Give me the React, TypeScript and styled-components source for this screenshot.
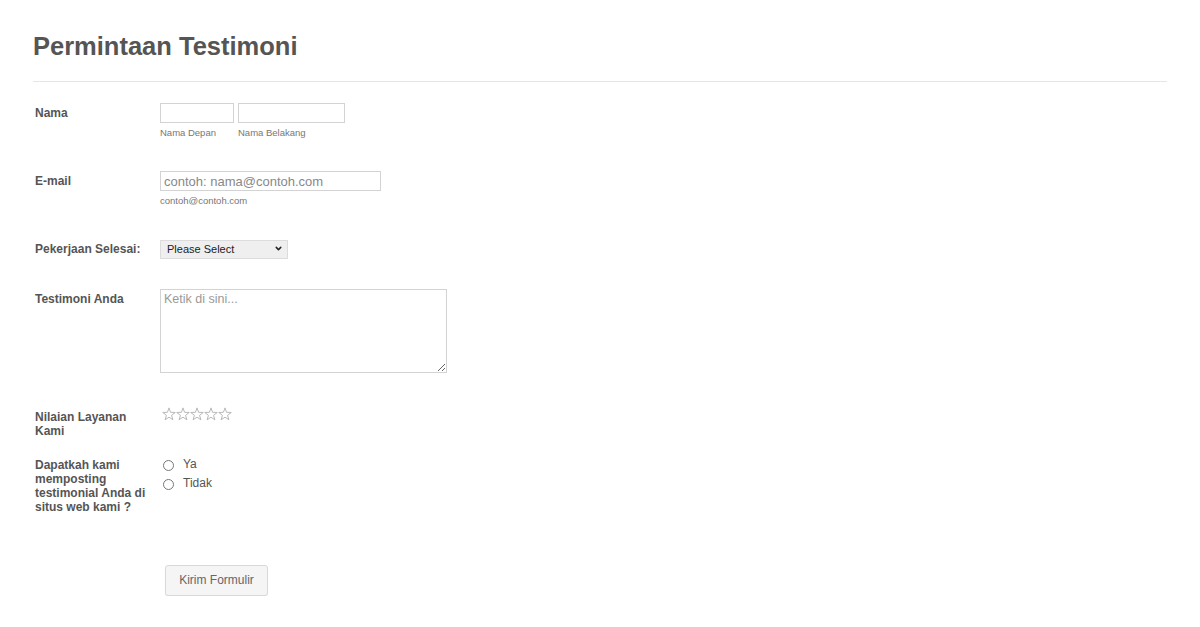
import React from "react";
import styled, { createGlobalStyle } from "styled-components";
import { ChevronDown } from "lucide-react";

const GlobalStyle = createGlobalStyle`
  body {
    margin: 0;
    background: #fff;
    font-family: "Liberation Sans", Arial, sans-serif;
  }
`;

const Page = styled.div`
  padding: 31px 33px 0 33px;
`;

const Title = styled.h1`
  margin: 0;
  font-size: 25.5px;
  line-height: 30px;
  font-weight: 700;
  color: #555;
`;

const Divider = styled.hr`
  margin: 20px 0 0 0;
  border: none;
  border-top: 1px solid #e6e6e6;
`;

const Form = styled.form`
  display: flex;
  flex-direction: column;
  padding: 21px 0 0 2px;
`;

const Row = styled.div<{ $gap: number }>`
  display: flex;
  align-items: flex-start;
  gap: 10px;
  padding-bottom: ${(p) => p.$gap}px;
`;

const Label = styled.label`
  width: 115px;
  flex-shrink: 0;
  padding-top: 3px;
  font-size: 12px;
  line-height: 14px;
  font-weight: 700;
  color: #555;
`;

const Field = styled.div`
  display: flex;
  gap: 4px;
`;

const FieldPart = styled.div`
  display: flex;
  flex-direction: column;
`;

const TextInput = styled.input<{ $width: number }>`
  box-sizing: border-box;
  width: ${(p) => p.$width}px;
  height: 20px;
  margin: 0;
  padding: 0 3px;
  border: 1px solid #d3d3d3;
  font-family: inherit;
  font-size: 13px;
  color: #333;
  outline: none;

  &::placeholder {
    color: #888;
  }
`;

const SubLabel = styled.span`
  margin-top: 4px;
  font-size: 9.5px;
  line-height: 12px;
  color: #777;
`;

const SelectWrap = styled.div`
  position: relative;
  width: 128px;
`;

const Select = styled.select`
  box-sizing: border-box;
  width: 128px;
  height: 19px;
  margin: 0;
  padding: 0 18px 0 6px;
  appearance: none;
  border: 1px solid #dcdcdc;
  border-radius: 0;
  background: #efefef;
  font-family: inherit;
  font-size: 11px;
  color: #222;
  outline: none;
`;

const SelectArrow = styled.span`
  position: absolute;
  right: 5px;
  top: 5px;
  display: flex;
  pointer-events: none;
  color: #222;
`;

const TextArea = styled.textarea`
  box-sizing: border-box;
  width: 287px;
  height: 84px;
  margin: 0;
  padding: 2px 3px;
  border: 1px solid #d3d3d3;
  font-family: inherit;
  font-size: 12.5px;
  color: #333;
  outline: none;

  &::placeholder {
    color: #999;
  }
`;

const Stars = styled.div`
  display: flex;
  padding-left: 2px;
`;

const StarBox = styled.svg`
  width: 14px;
  height: 14px;
  display: block;
`;

const Options = styled.div`
  display: flex;
  flex-direction: column;
`;

const Option = styled.label`
  display: flex;
  align-items: center;
  gap: 9px;
  height: 19px;
  padding-left: 3px;
  font-size: 12px;
  color: #555;
`;

const Radio = styled.input`
  appearance: none;
  box-sizing: border-box;
  width: 11px;
  height: 11px;
  margin: 3px 0 0 0;
  border: 1px solid #777;
  border-radius: 50%;
  background: #fff;
`;

const ButtonRow = styled.div`
  padding-left: 130px;
`;

const SubmitButton = styled.button`
  box-sizing: border-box;
  width: 103px;
  height: 31px;
  border: 1px solid #d9d9d9;
  border-radius: 3px;
  background: #f5f5f5;
  box-shadow: 0 1px 1px rgba(0, 0, 0, 0.05);
  font-family: inherit;
  font-size: 12px;
  color: #666;
`;

const Star = () => (
  <StarBox viewBox="0 0 14 14">
    <polygon
      points="7,0.9 8.59,5.32 13.28,5.46 9.57,8.33 10.88,12.84 7,10.2 3.12,12.84 4.43,8.33 0.72,5.46 5.41,5.32"
      fill="#fff"
      stroke="#b8b8b8"
      strokeWidth="1"
      strokeLinejoin="round"
    />
  </StarBox>
);

export default function App() {
  return (
    <Page>
      <GlobalStyle />
      <Title>Permintaan Testimoni</Title>
      <Divider />
      <Form onSubmit={(e) => e.preventDefault()}>
        <Row $gap={32}>
          <Label>Nama</Label>
          <Field>
            <FieldPart>
              <TextInput $width={74} />
              <SubLabel>Nama Depan</SubLabel>
            </FieldPart>
            <FieldPart>
              <TextInput $width={107} />
              <SubLabel>Nama Belakang</SubLabel>
            </FieldPart>
          </Field>
        </Row>

        <Row $gap={32}>
          <Label>E-mail</Label>
          <FieldPart>
            <TextInput $width={221} placeholder="contoh: nama@contoh.com" />
            <SubLabel>contoh@contoh.com</SubLabel>
          </FieldPart>
        </Row>

        <Row $gap={30}>
          <Label>Pekerjaan Selesai:</Label>
          <SelectWrap>
            <Select defaultValue="">
              <option value="">Please Select</option>
              <option value="ya">Ya</option>
              <option value="tidak">Tidak</option>
            </Select>
            <SelectArrow>
              <ChevronDown size={9} strokeWidth={4} />
            </SelectArrow>
          </SelectWrap>
        </Row>

        <Row $gap={34}>
          <Label>Testimoni Anda</Label>
          <TextArea placeholder="Ketik di sini..." />
        </Row>

        <Row $gap={17}>
          <Label>Nilaian Layanan Kami</Label>
          <Stars>
            {[0, 1, 2, 3, 4].map((i) => (
              <Star key={i} />
            ))}
          </Stars>
        </Row>

        <Row $gap={51}>
          <Label>Dapatkah kami memposting testimonial Anda di situs web kami ?</Label>
          <Options>
            <Option>
              <Radio type="radio" name="posting" />
              Ya
            </Option>
            <Option>
              <Radio type="radio" name="posting" />
              Tidak
            </Option>
          </Options>
        </Row>

        <ButtonRow>
          <SubmitButton type="submit">Kirim Formulir</SubmitButton>
        </ButtonRow>
      </Form>
    </Page>
  );
}
